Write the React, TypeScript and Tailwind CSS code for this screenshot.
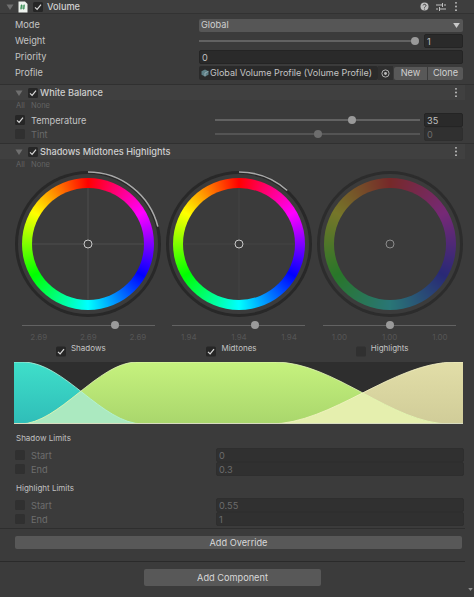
import { FC } from "react";

const Check: FC<{ on?: boolean; dim?: boolean; className?: string }> = ({ on, dim, className = "" }) => (
  <span className={`flex h-[10px] w-[10px] shrink-0 items-center justify-center rounded-[1.5px] ${dim ? "bg-[#303030]" : "bg-[#262626]"} ${className}`}>
    {on && (
      <svg viewBox="0 0 10 10" className="h-[10px] w-[10px]">
        <path d="M2 5.4 4.1 7.4 8 2.6" fill="none" stroke="#d8d8d8" strokeWidth="1.2" />
      </svg>
    )}
  </span>
);

const Slider: FC<{ pct: number; dim?: boolean; className?: string }> = ({ pct, dim, className = "" }) => (
  <div className={`relative h-[1.5px] ${dim ? "bg-[#545454]" : "bg-[#626262]"} ${className}`}>
    <span
      className={`absolute top-[-3.5px] -ml-[4px] h-[8px] w-[8px] rounded-full ${dim ? "bg-[#6d6d6d]" : "bg-[#9a9a9a]"}`}
      style={{ left: `${pct}%` }}
    />
  </div>
);

const Dots: FC = () => (
  <svg viewBox="0 0 4 12" className="h-[11px] w-[4px]">
    <circle cx="2" cy="2" r="1" fill="#c4c4c4" />
    <circle cx="2" cy="6" r="1" fill="#c4c4c4" />
    <circle cx="2" cy="10" r="1" fill="#c4c4c4" />
  </svg>
);

const Arrow: FC = () => (
  <svg viewBox="0 0 8 8" className="h-[8px] w-[8px]">
    <path d="M0.5 1.5H7.5L4 7Z" fill="#6f6f6f" />
  </svg>
);

const Field: FC<{ value: string; dim?: boolean; className?: string }> = ({ value, dim, className = "" }) => (
  <div className={`flex h-[14px] items-center rounded-[2px] border px-[2px] pt-px text-[9.2px] ${dim ? "border-[#2e2e2e] bg-[#303030] text-[#6c6c6c]" : "border-[#242424] bg-[#2a2a2a] text-[#c0c0c0]"} ${className}`}>
    {value}
  </div>
);

const SectionHeader: FC<{ title: string }> = ({ title }) => (
  <div className="flex h-[15px] w-[465px] items-center bg-[#404040] pl-[15px] pr-[7px]">
    <Arrow />
    <Check on className="ml-[5px]" />
    <span className="ml-[2px] flex-1 pt-px text-[9.2px] font-medium text-[#cfcfcf]">{title}</span>
    <Dots />
  </div>
);

const AllNone: FC = () => (
  <div className="flex h-[11px] items-center pl-[16px] text-[7.5px] text-[#636363]">
    <span className="w-[15px]">All</span>
    <span>None</span>
  </div>
);

const Wheel: FC<{ arc?: string; dim?: boolean; faint?: boolean }> = ({ arc, dim, faint }) => (
  <div className={`relative flex h-[146px] w-[146px] items-center justify-center rounded-full ${dim ? "bg-[#2c2c2c]" : "bg-[#282828]"}`}>
    <div className="flex h-[140px] w-[140px] items-center justify-center rounded-full bg-[#3b3b3b]">
      <div className={`flex h-[132px] w-[132px] items-center justify-center rounded-full bg-[conic-gradient(#ff0000,#ff00ff,#0000ff,#00ffff,#00ff00,#ffff00,#ff0000)] ${dim ? "opacity-30" : ""}`}>
        <div className="h-[112px] w-[112px] rounded-full bg-[#3b3b3b]" />
      </div>
    </div>
    <svg viewBox="-73 -73 146 146" className="absolute inset-0 h-[146px] w-[146px]">
      {!dim && (
        <path d="M-56 0H-4M4 0H56M0 -56V-4M0 4V56" stroke={faint ? "#454545" : "#4e4e4e"} strokeWidth="1" fill="none" />
      )}
      {arc && <path d={arc} stroke="#a8a8a8" strokeWidth="1.6" fill="none" />}
      <circle r="4" fill="none" stroke={dim ? "#8c8c8c" : "#c8c8c8"} strokeWidth="1" />
    </svg>
  </div>
);

const WheelColumn: FC<{
  arc?: string;
  dim?: boolean;
  faint?: boolean;
  pct: number;
  value: string;
  label: string;
}> = ({ arc, dim, faint, pct, value, label }) => (
  <div className="flex flex-col items-center">
    <Wheel arc={arc} dim={dim} faint={faint} />
    <Slider pct={pct} className="mt-[7.5px] w-[133px]" />
    <div className="mt-[5px] flex h-[12px] w-[116px] items-center justify-between text-[8px] text-[#565656]">
      <span>{value}</span>
      <span>{value}</span>
      <span>{value}</span>
    </div>
    <div className="flex h-[10px] items-center justify-center text-[8px] text-[#c4c4c4]">
      <Check on={!dim} dim={dim} className="-ml-[15px] mr-[5px] translate-y-[3.5px]" />
      <span>{label}</span>
    </div>
  </div>
);

const shadowEdge = "M0 0H9C50 0 88 62 129 62";
const greenEdge = "M6 62C45 62 84 0 123 0H261C320 0 378 62 436 62";
const yellowEdge = "M256 62C318 62 379 0 441 0H449";

const Curves: FC = () => (
  <svg viewBox="0 0 449 62" className="h-[62px] w-[449px]">
    <defs>
      <linearGradient id="cy" x1="0" y1="0" x2="0" y2="1">
        <stop offset="0" stopColor="#3fdfca" />
        <stop offset="1" stopColor="#2fbdb8" />
      </linearGradient>
      <linearGradient id="gr" x1="0" y1="0" x2="0" y2="1">
        <stop offset="0" stopColor="#c6f27e" />
        <stop offset="1" stopColor="#a9d66c" />
      </linearGradient>
      <linearGradient id="ye" x1="0" y1="0" x2="0" y2="1">
        <stop offset="0" stopColor="#e2dea8" />
        <stop offset="1" stopColor="#d0cc98" />
      </linearGradient>
      <clipPath id="clipGreen">
        <path d={`${greenEdge}Z`} />
      </clipPath>
    </defs>
    <rect width="449" height="62" fill="#2e2e2e" />
    <path d={`${shadowEdge}H0Z`} fill="url(#cy)" />
    <path d={`${yellowEdge}V62Z`} fill="url(#ye)" />
    <path d={`${greenEdge}Z`} fill="url(#gr)" />
    <g clipPath="url(#clipGreen)">
      <path d={`${shadowEdge}H0Z`} fill="#abe9c0" />
      <path d={`${yellowEdge}V62Z`} fill="#e5efae" />
    </g>
    <path d={shadowEdge} fill="none" stroke="#b4f5e0" strokeWidth="0.8" />
    <path d={greenEdge} fill="none" stroke="#e6f8b8" strokeWidth="0.8" />
    <path d={yellowEdge} fill="none" stroke="#f6f4c8" strokeWidth="0.8" />
    <path d="M0 61.5H449" stroke="#d8dcc0" strokeWidth="1" />
  </svg>
);

const LimitRow: FC<{ label: string; value: string }> = ({ label, value }) => (
  <div className="flex h-[14px] items-center pl-[15px] text-[9.2px] text-[#6e6e6e]">
    <Check dim />
    <span className="ml-[6px] w-[185px] pt-px">{label}</span>
    <Field value={value} dim className="w-[248px]" />
  </div>
);

export default function App() {
  return (
    <div className="relative flex h-[597px] w-[474px] flex-col overflow-hidden bg-[#3b3b3b] font-['Inter',sans-serif] text-[#c4c4c4]">
      <div className="flex h-[14px] items-center border-b border-[#323232] bg-[#3e3e3e] pl-[6px] pr-[16px]">
        <Arrow />
        <svg viewBox="0 0 10 12" className="ml-[4px] h-[12px] w-[10px]">
          <path d="M0.5 0.5H7L9.5 3V11.5H0.5Z" fill="#eef3ee" />
          <path d="M3.6 3.5 3 8.5M6.2 3.5 5.6 8.5M2.4 5H7M2.2 7H6.8" stroke="#2f8a4e" strokeWidth="0.9" fill="none" />
        </svg>
        <Check on className="ml-[5px]" />
        <span className="ml-[4px] flex-1 text-[9.2px] font-medium text-[#d0d0d0]">Volume</span>
        <svg viewBox="0 0 9 9" className="h-[9px] w-[9px]">
          <circle cx="4.5" cy="4.5" r="4" fill="#c0c0c0" />
          <path d="M3.1 3.4C3.3 1.9 6 2 6 3.5 6 4.6 4.5 4.6 4.5 5.7" fill="none" stroke="#3e3e3e" strokeWidth="1" />
          <circle cx="4.5" cy="7" r="0.6" fill="#3e3e3e" />
        </svg>
        <svg viewBox="0 0 10 10" className="ml-[7px] h-[10px] w-[10px]">
          <path d="M0 3H6M8 3H10M0 7H2M4 7H10" stroke="#c0c0c0" strokeWidth="1" />
          <path d="M6.5 1V5M3.5 5V9" stroke="#c0c0c0" strokeWidth="1" />
        </svg>
        <span className="ml-[8px] flex">
          <Dots />
        </span>
      </div>

      <div className="mt-[3px] flex h-[16px] items-center pl-[15px] pr-[11px] text-[9.2px]">
        <span className="w-[184px]">Mode</span>
        <div className="flex h-[13px] flex-1 items-center justify-between rounded-[2px] bg-[#565656] pl-[2px] pr-[3px] text-[#d0d0d0]">
          Global
          <svg viewBox="0 0 8 6" className="h-[5px] w-[7px]">
            <path d="M0 0H8L4 6Z" fill="#c8c8c8" />
          </svg>
        </div>
      </div>
      <div className="flex h-[16px] items-center pl-[15px] pr-[11px] text-[9.2px]">
        <span className="w-[184px]">Weight</span>
        <Slider pct={99} className="w-[218px]" />
        <Field value="1" className="ml-[7px] flex-1" />
      </div>
      <div className="flex h-[16px] items-center pl-[15px] pr-[11px] text-[9.2px]">
        <span className="w-[184px]">Priority</span>
        <Field value="0" className="flex-1" />
      </div>
      <div className="flex h-[16px] items-center pl-[15px] pr-[11px] text-[9.2px]">
        <span className="w-[184px]">Profile</span>
        <div className="flex h-[14px] w-[179px] items-center overflow-hidden rounded-[2px] bg-[#2a2a2a] pl-[2px]">
          <svg viewBox="0 0 8 8" className="h-[8px] w-[8px] shrink-0">
            <path d="M4 0.5 7.5 2.3V5.7L4 7.5 0.5 5.7V2.3Z" fill="#5d7f86" />
            <path d="M4 4V7.5M4 4 7.5 2.3" stroke="#b8c8cc" strokeWidth="0.6" />
          </svg>
          <span className="ml-[1px] whitespace-nowrap text-[9px]">Global Volume Profile (Volume Profile)</span>
        </div>
        <div className="flex h-[14px] w-[15px] items-center justify-center bg-[#2f2f2f]">
          <svg viewBox="0 0 10 10" className="h-[9px] w-[9px]">
            <circle cx="5" cy="5" r="4" fill="none" stroke="#bdbdbd" strokeWidth="1" />
            <circle cx="5" cy="5" r="1.6" fill="#bdbdbd" />
          </svg>
        </div>
        <div className="ml-[1px] flex h-[13px] w-[33px] items-center justify-center rounded-l-[2px] bg-[#585858] text-[#d0d0d0]">New</div>
        <div className="ml-[1px] flex h-[13px] flex-1 items-center justify-center rounded-r-[2px] bg-[#585858] text-[#d0d0d0]">Clone</div>
      </div>

      <div className="mt-[3px] h-[1px] bg-[#303030]" />
      <SectionHeader title="White Balance" />
      <AllNone />
      <div className="mt-[2px] flex h-[14px] items-center pl-[15px] pr-[11px] text-[9.2px]">
        <Check on />
        <span className="ml-[6px] w-[184px] pt-px">Temperature</span>
        <Slider pct={67} className="w-[205px]" />
        <Field value="35" className="ml-[4px] flex-1" />
      </div>
      <div className="flex h-[14px] items-center pl-[15px] pr-[11px] text-[9.2px] text-[#6a6a6a]">
        <Check dim />
        <span className="ml-[6px] w-[184px] pt-px">Tint</span>
        <Slider pct={50} dim className="w-[205px]" />
        <Field value="0" dim className="ml-[4px] flex-1" />
      </div>

      <div className="mt-[2px] h-[1px] bg-[#303030]" />
      <SectionHeader title="Shadows Midtones Highlights" />
      <AllNone />

      <div className="ml-[13px] mt-[1px] grid w-[452px] grid-cols-3">
        <WheelColumn arc="M0 -72A72 72 0 0 1 69.9 -17.4" pct={70} value="2.69" label="Shadows" />
        <WheelColumn arc="M0 -72A72 72 0 0 1 48.2 -53.5" faint pct={62} value="1.94" label="Midtones" />
        <WheelColumn dim pct={50} value="1.00" label="Highlights" />
      </div>

      <div className="ml-[14px] mt-[9px] h-[62px] w-[449px]">
        <Curves />
      </div>

      <div className="mt-[8px] flex h-[12px] items-center pl-[16px] text-[8px] text-[#c0c0c0]">Shadow Limits</div>
      <div className="mt-[4px]">
        <LimitRow label="Start" value="0" />
        <LimitRow label="End" value="0.3" />
      </div>
      <div className="mt-[6px] flex h-[12px] items-center pl-[16px] text-[8px] text-[#c0c0c0]">Highlight Limits</div>
      <div className="mt-[4px]">
        <LimitRow label="Start" value="0.55" />
        <LimitRow label="End" value="1" />
      </div>

      <div className="mt-[2px] h-[1px] w-[465px] bg-[#2e2e2e]" />
      <div className="ml-[15px] mt-[7px] flex h-[13px] w-[447px] items-center justify-center rounded-[2px] bg-[#585858] pt-px text-[9.2px] text-[#d8d8d8]">
        Add Override
      </div>
      <div className="mt-[12px] h-[1px] w-[465px] bg-[#2a2a2a]" />
      <div className="ml-[144px] mt-[7px] flex h-[17px] w-[177px] items-center justify-center rounded-[2px] bg-[#585858] text-[9.2px] text-[#d8d8d8]">
        Add Component
      </div>
      <svg viewBox="0 0 6 4" className="absolute bottom-[6px] right-[1px] h-[3px] w-[5px]">
        <path d="M0 0H6L3 4Z" fill="#8c8c8c" />
      </svg>
    </div>
  );
}
